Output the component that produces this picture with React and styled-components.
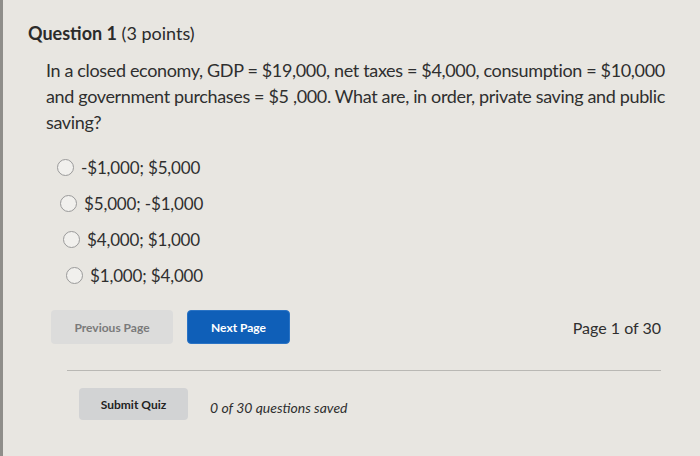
import React from 'react';
import styled, { createGlobalStyle } from 'styled-components';

const Global = createGlobalStyle`
  html, body {
    margin: 0;
    padding: 0;
    background: #e8e6e1;
  }
  body {
    font-family: Lato, "Open Sans", sans-serif;
    color: #2f2f2f;
  }
`;

const options = [
  '-$1,000; $5,000',
  '$5,000; -$1,000',
  '$4,000; $1,000',
  '$1,000; $4,000',
];

export default function App() {
  return (
    <Frame>
      <Global />
      <Title>
        <b>Question 1</b> (3 points)
      </Title>
      <Prompt>
        In a closed economy, GDP = $19,000, net taxes = $4,000, consumption = $10,000
        <br />
        and government purchases = $5 ,000. What are, in order, private saving and public
        <br />
        saving?
      </Prompt>
      <Options>
        {options.map((o, i) => (
          <Option key={o} $shift={i * 3}>
            <Radio />
            <span>{o}</span>
          </Option>
        ))}
      </Options>
      <Nav>
        <Button $kind="muted">Previous Page</Button>
        <Button $kind="primary">Next Page</Button>
        <PageCount>Page 1 of 30</PageCount>
      </Nav>
      <Divider />
      <Footer>
        <Button $kind="submit">Submit Quiz</Button>
        <Saved>0 of 30 questions saved</Saved>
      </Footer>
    </Frame>
  );
}

const Frame = styled.div`
  width: 700px;
  height: 456px;
  box-sizing: border-box;
  border-left: 3px solid #8f8e8a;
  padding: 21px 39px 0 25px;
  overflow: hidden;
`;

const Title = styled.h2`
  margin: 0;
  font-size: 18px;
  line-height: 24px;
  font-weight: 400;
  color: #2b2b2b;
  b {
    font-weight: 700;
  }
`;

const Prompt = styled.p`
  margin: 12px 0 0 18px;
  font-size: 18px;
  line-height: 26px;
  letter-spacing: -0.35px;
  white-space: nowrap;
  color: #2f2f2f;
`;

const Options = styled.div`
  margin-top: 14px;
  display: flex;
  flex-direction: column;
`;

const Option = styled.label`
  display: flex;
  align-items: center;
  gap: 7px;
  height: 36px;
  padding-left: ${p => 29 + p.$shift}px;
  font-size: 17px;
  letter-spacing: -0.15px;
  color: #2f2f2f;
`;

const Radio = styled.span`
  width: 17px;
  height: 17px;
  box-sizing: border-box;
  border-radius: 50%;
  border: 1.5px solid #9a9a9a;
  background: #f1f0ed;
`;

const Nav = styled.div`
  margin-top: 17px;
  padding-left: 23px;
  display: flex;
  align-items: center;
  gap: 14px;
`;

const kinds = {
  muted: 'background:#dcdcdb; color:#7a7a7a; width:122px; height:34px;',
  primary: 'background:#0f5fb8; color:#fff; width:103px; height:34px; border:1px solid #2a73c4;',
  submit: 'background:#d2d3d4; color:#222; width:109px; height:32px;',
};

const Button = styled.button`
  box-sizing: border-box;
  border: none;
  border-radius: 4px;
  font-family: Lato, sans-serif;
  font-weight: 700;
  font-size: 12px;
  ${p => kinds[p.$kind]}
`;

const PageCount = styled.span`
  margin-left: auto;
  font-size: 16px;
  color: #2f2f2f;
`;

const Divider = styled.hr`
  margin: 26px 0 0 39px;
  border: none;
  border-top: 1.5px solid #b9b8b4;
`;

const Footer = styled.div`
  margin-top: 17px;
  padding-left: 51px;
  display: flex;
  align-items: center;
  gap: 22px;
`;

const Saved = styled.span`
  font-style: italic;
  font-size: 14px;
  color: #2f2f2f;
  margin-top: 6px;
`;
